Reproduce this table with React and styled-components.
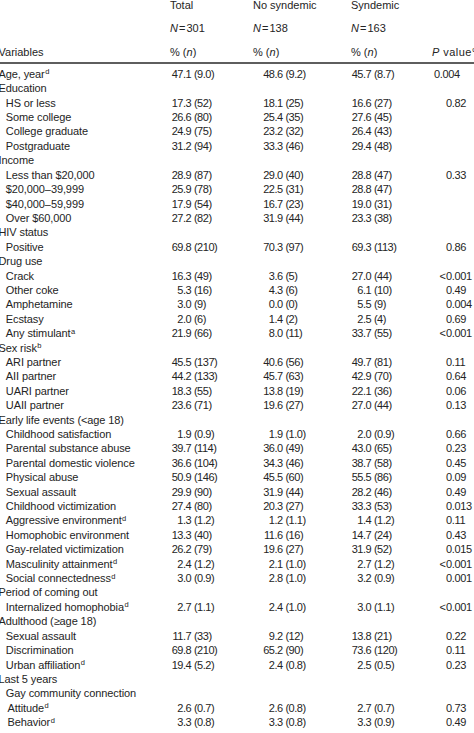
import React from "react";
import styled, { createGlobalStyle } from "styled-components";

const GlobalStyle = createGlobalStyle`
  html, body {
    margin: 0;
    padding: 0;
    background: #ffffff;
  }
  body {
    font-family: "Liberation Sans", Arial, sans-serif;
    font-size: 11px;
    color: #242424;
  }
`;

const COLS = "170px 83px 98px 79px 1fr";

const Page = styled.div`
  width: 474px;
  height: 733px;
  overflow: hidden;
  background: #fff;
`;

const Table = styled.div`
  width: 474px;
  margin-top: -2.3px;
`;

const Head = styled.div`
  display: grid;
  grid-template-columns: ${COLS};
  row-gap: 9px;
  line-height: 14.42px;
`;

const HeadCell = styled.div`
  white-space: nowrap;
  text-indent: ${(p) => (p.$first ? "-1.5px" : "0")};
`;

const PHead = styled.div`
  white-space: nowrap;
  padding-left: 2px;
  letter-spacing: 0.45px;
`;

const Rule = styled.div`
  height: 1.3px;
  background: #5e5e5e;
  margin-top: 3.4px;
  margin-bottom: 3.2px;
`;

const Body = styled.div`
  display: flex;
  flex-direction: column;
`;

const Row = styled.div`
  display: grid;
  grid-template-columns: ${COLS};
  height: 14.42px;
  line-height: 14.42px;
  white-space: nowrap;
`;

const Label = styled.div`
  padding-left: ${(p) => (p.$level === 0 ? "0" : p.$level === 1 ? "5.8px" : "7.5px")};
  text-indent: ${(p) => (p.$level === 0 ? "-1.5px" : "0")};
  letter-spacing: -0.1px;
  overflow: visible;
`;

const Value = styled.div`
  letter-spacing: -0.45px;
`;

const IntPart = styled.span`
  display: inline-block;
  width: ${(p) => p.$w}px;
  text-align: right;
`;

const PCell = styled.div`
  padding-left: ${(p) => 16 - (p.$shift || 0)}px;
  letter-spacing: -0.35px;
`;

const Hang = styled.span`
  display: inline-block;
  margin-left: -6.4px;
  width: 6.4px;
  letter-spacing: 0;
`;

const Sup = styled.sup`
  font-size: 7.5px;
  line-height: 0;
  vertical-align: 3.5px;
  margin-left: 0.5px;
  letter-spacing: 0;
`;

const It = styled.i`
  font-style: italic;
`;

const Eq = styled.span`
  margin: 0 1px;
`;

const INT_W = [13, 21.5, 12];

const rows = [
  { l: "Age, year", s: "d", lv: 0, v: ["47.1 (9.0)", "48.6 (9.2)", "45.7 (8.7)"], p: "0.004", shift: 12 },
  { l: "Education", lv: 0 },
  { l: "HS or less", lv: 1, v: ["17.3 (52)", "18.1 (25)", "16.6 (27)"], p: "0.82" },
  { l: "Some college", lv: 1, v: ["26.6 (80)", "25.4 (35)", "27.6 (45)"] },
  { l: "College graduate", lv: 1, v: ["24.9 (75)", "23.2 (32)", "26.4 (43)"] },
  { l: "Postgraduate", lv: 1, v: ["31.2 (94)", "33.3 (46)", "29.4 (48)"] },
  { l: "Income", lv: 0 },
  { l: "Less than $20,000", lv: 1, v: ["28.9 (87)", "29.0 (40)", "28.8 (47)"], p: "0.33" },
  { l: "$20,000–39,999", lv: 1, v: ["25.9 (78)", "22.5 (31)", "28.8 (47)"] },
  { l: "$40,000–59,999", lv: 1, v: ["17.9 (54)", "16.7 (23)", "19.0 (31)"] },
  { l: "Over $60,000", lv: 1, v: ["27.2 (82)", "31.9 (44)", "23.3 (38)"] },
  { l: "HIV status", lv: 0 },
  { l: "Positive", lv: 1, v: ["69.8 (210)", "70.3 (97)", "69.3 (113)"], p: "0.86" },
  { l: "Drug use", lv: 0 },
  { l: "Crack", lv: 1, v: ["16.3 (49)", "3.6 (5)", "27.0 (44)"], p: "<0.001" },
  { l: "Other coke", lv: 1, v: ["5.3 (16)", "4.3 (6)", "6.1 (10)"], p: "0.49" },
  { l: "Amphetamine", lv: 1, v: ["3.0 (9)", "0.0 (0)", "5.5 (9)"], p: "0.004" },
  { l: "Ecstasy", lv: 1, v: ["2.0 (6)", "1.4 (2)", "2.5 (4)"], p: "0.69" },
  { l: "Any stimulant", s: "a", lv: 1, v: ["21.9 (66)", "8.0 (11)", "33.7 (55)"], p: "<0.001" },
  { l: "Sex risk", s: "b", lv: 0 },
  { l: "ARI partner", lv: 1, v: ["45.5 (137)", "40.6 (56)", "49.7 (81)"], p: "0.11" },
  { l: "AII partner", lv: 1, v: ["44.2 (133)", "45.7 (63)", "42.9 (70)"], p: "0.64" },
  { l: "UARI partner", lv: 1, v: ["18.3 (55)", "13.8 (19)", "22.1 (36)"], p: "0.06" },
  { l: "UAII partner", lv: 1, v: ["23.6 (71)", "19.6 (27)", "27.0 (44)"], p: "0.13" },
  { l: "Early life events (<age 18)", lv: 0 },
  { l: "Childhood satisfaction", lv: 1, v: ["1.9 (0.9)", "1.9 (1.0)", "2.0 (0.9)"], p: "0.66" },
  { l: "Parental substance abuse", lv: 1, v: ["39.7 (114)", "36.0 (49)", "43.0 (65)"], p: "0.23" },
  { l: "Parental domestic violence", lv: 1, v: ["36.6 (104)", "34.3 (46)", "38.7 (58)"], p: "0.45" },
  { l: "Physical abuse", lv: 1, v: ["50.9 (146)", "45.5 (60)", "55.5 (86)"], p: "0.09" },
  { l: "Sexual assault", lv: 1, v: ["29.9 (90)", "31.9 (44)", "28.2 (46)"], p: "0.49" },
  { l: "Childhood victimization", lv: 1, v: ["27.4 (80)", "20.3 (27)", "33.3 (53)"], p: "0.013" },
  { l: "Aggressive environment", s: "d", lv: 1, v: ["1.3 (1.2)", "1.2 (1.1)", "1.4 (1.2)"], p: "0.11" },
  { l: "Homophobic environment", lv: 1, v: ["13.3 (40)", "11.6 (16)", "14.7 (24)"], p: "0.43" },
  { l: "Gay-related victimization", lv: 1, v: ["26.2 (79)", "19.6 (27)", "31.9 (52)"], p: "0.015" },
  { l: "Masculinity attainment", s: "d", lv: 1, v: ["2.4 (1.2)", "2.1 (1.0)", "2.7 (1.2)"], p: "<0.001" },
  { l: "Social connectedness", s: "d", lv: 1, v: ["3.0 (0.9)", "2.8 (1.0)", "3.2 (0.9)"], p: "0.001" },
  { l: "Period of coming out", lv: 0 },
  { l: "Internalized homophobia", s: "d", lv: 1, v: ["2.7 (1.1)", "2.4 (1.0)", "3.0 (1.1)"], p: "<0.001" },
  { l: "Adulthood (≥age 18)", lv: 0 },
  { l: "Sexual assault", lv: 1, v: ["11.7 (33)", "9.2 (12)", "13.8 (21)"], p: "0.22" },
  { l: "Discrimination", lv: 1, v: ["69.8 (210)", "65.2 (90)", "73.6 (120)"], p: "0.11" },
  { l: "Urban affiliation", s: "d", lv: 1, v: ["19.4 (5.2)", "2.4 (0.8)", "2.5 (0.5)"], p: "0.23" },
  { l: "Last 5 years", lv: 0 },
  { l: "Gay community connection", lv: 1 },
  { l: "Attitude", s: "d", lv: 2, v: ["2.6 (0.7)", "2.6 (0.8)", "2.7 (0.7)"], p: "0.73" },
  { l: "Behavior", s: "d", lv: 2, v: ["3.3 (0.8)", "3.3 (0.8)", "3.3 (0.9)"], p: "0.49" },
];

function NumberCell({ text, w }) {
  if (!text) return <Value />;
  const dot = text.indexOf(".");
  return (
    <Value>
      <IntPart $w={w}>{text.slice(0, dot)}</IntPart>
      {text.slice(dot)}
    </Value>
  );
}

function PValue({ text, shift }) {
  if (!text) return <PCell />;
  if (text.startsWith("<")) {
    return (
      <PCell $shift={shift}>
        <Hang>&lt;</Hang>
        {text.slice(1)}
      </PCell>
    );
  }
  return <PCell $shift={shift}>{text}</PCell>;
}

export default function App() {
  return (
    <>
      <GlobalStyle />
      <Page>
        <Table>
          <Head>
            <HeadCell $first />
            <HeadCell>Total</HeadCell>
            <HeadCell>No syndemic</HeadCell>
            <HeadCell>Syndemic</HeadCell>
            <HeadCell />

            <HeadCell $first />
            <HeadCell>
              <It>N</It>
              <Eq>=</Eq>301
            </HeadCell>
            <HeadCell>
              <It>N</It>
              <Eq>=</Eq>138
            </HeadCell>
            <HeadCell>
              <It>N</It>
              <Eq>=</Eq>163
            </HeadCell>
            <HeadCell />

            <HeadCell $first>Variables</HeadCell>
            <HeadCell>
              % (<It>n</It>)
            </HeadCell>
            <HeadCell>
              % (<It>n</It>)
            </HeadCell>
            <HeadCell>
              % (<It>n</It>)
            </HeadCell>
            <PHead>
              <It>P</It> value<Sup>c</Sup>
            </PHead>
          </Head>
          <Rule />
          <Body>
            {rows.map((r, i) => (
              <Row key={i}>
                <Label $level={r.lv}>
                  {r.l}
                  {r.s && <Sup>{r.s}</Sup>}
                </Label>
                {[0, 1, 2].map((c) => (
                  <NumberCell key={c} text={r.v && r.v[c]} w={INT_W[c]} />
                ))}
                <PValue text={r.p} shift={r.shift} />
              </Row>
            ))}
          </Body>
        </Table>
      </Page>
    </>
  );
}
